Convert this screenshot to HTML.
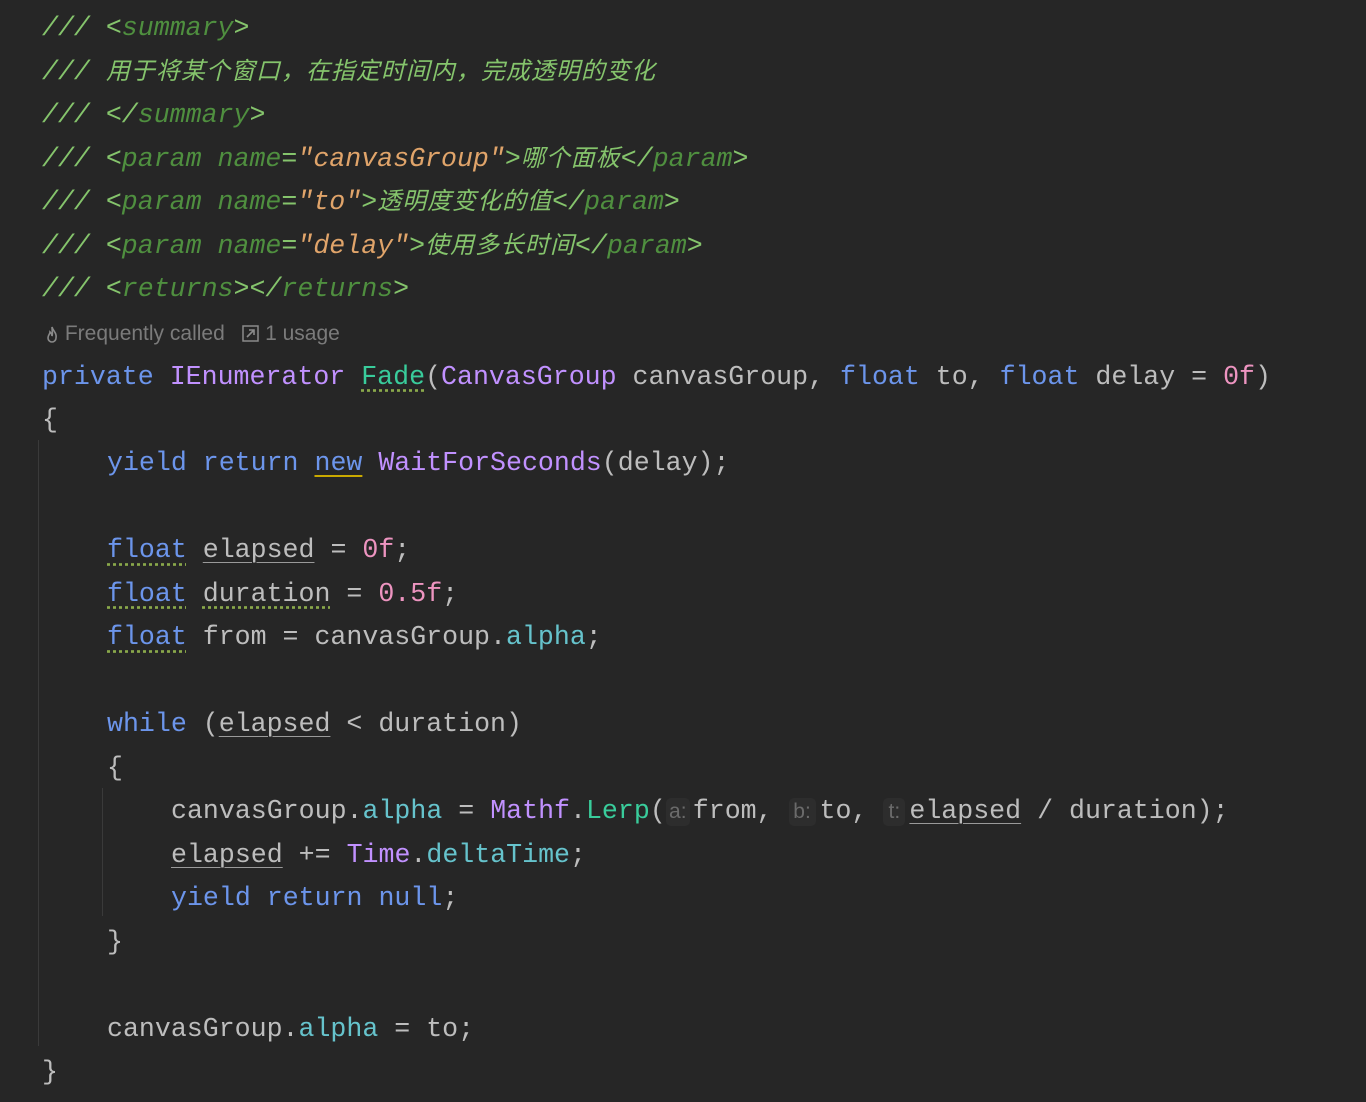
<!DOCTYPE html>
<html><head><meta charset="utf-8"><style>
html,body{margin:0;background:#262626;width:1366px;height:1102px;overflow:hidden}
.l{position:absolute;left:0;height:43.5px;line-height:43.5px;white-space:pre;font-family:"Liberation Mono","Noto Sans CJK SC",monospace;font-size:26.6px;color:#bdbdbd}
.c{color:#85c46c;font-style:italic}
.t{color:#4f8f3f;font-style:italic}
.s{color:#e0a46a;font-style:italic}
.z{font-family:"Noto Sans CJK SC",sans-serif;font-size:24px;font-style:italic;color:#85c46c;letter-spacing:1px;line-height:0}
.k{color:#6c95eb}.p{color:#c191ff}.m{color:#39cc9b}.n{color:#ed94c0}.f{color:#66c3cc}
.dot{text-decoration:underline dotted #8aa84a;text-underline-offset:6px}
.ul{text-decoration:underline #9a9a9a;text-decoration-thickness:1px;text-underline-offset:5px}
.uy{text-decoration:underline #c9a900;text-underline-offset:5px}
.h{display:inline-block;font-family:"Liberation Sans",sans-serif;font-size:21px;color:#6b6b6b;background:#2d2d2d;border-radius:5px;text-align:center;line-height:28px}
.hint{font-family:"Liberation Sans",sans-serif;font-size:21px;color:#7b7b7b}
.g{position:absolute;width:1px;background:#3a3a3a}
</style></head><body>
<div class="g" style="left:38px;top:440px;height:606px"></div>
<div class="g" style="left:102px;top:788px;height:128px"></div>
<div class="l" style="top:7px;left:42px"><span class="c">/// &lt;</span><span class="t">summary</span><span class="c">&gt;</span></div>
<div class="l" style="top:50.5px;left:42px"><span class="c">/// </span><span class="z">用于将某个窗口，在指定时间内，完成透明的变化</span></div>
<div class="l" style="top:94px;left:42px"><span class="c">/// &lt;/</span><span class="t">summary</span><span class="c">&gt;</span></div>
<div class="l" style="top:137.5px;left:42px"><span class="c">/// &lt;</span><span class="t">param name</span><span class="c">=</span><span class="s">"canvasGroup"</span><span class="c">&gt;</span><span class="z">哪个面板</span><span class="c">&lt;/</span><span class="t">param</span><span class="c">&gt;</span></div>
<div class="l" style="top:181px;left:42px"><span class="c">/// &lt;</span><span class="t">param name</span><span class="c">=</span><span class="s">"to"</span><span class="c">&gt;</span><span class="z">透明度变化的值</span><span class="c">&lt;/</span><span class="t">param</span><span class="c">&gt;</span></div>
<div class="l" style="top:224.5px;left:42px"><span class="c">/// &lt;</span><span class="t">param name</span><span class="c">=</span><span class="s">"delay"</span><span class="c">&gt;</span><span class="z">使用多长时间</span><span class="c">&lt;/</span><span class="t">param</span><span class="c">&gt;</span></div>
<div class="l" style="top:268px;left:42px"><span class="c">/// &lt;</span><span class="t">returns</span><span class="c">&gt;&lt;/</span><span class="t">returns</span><span class="c">&gt;</span></div>
<div class="l hint" style="top:312px;left:45px"><svg width="14" height="18" viewBox="0 0 14 18" style="vertical-align:-3px"><path d="M7 2C8 6 12 8 11 13a4 4 0 0 1-8 0C3 10 5 9 5 7c1 1 2 2 2 4 1-2 0-5 0-9z" fill="none" stroke="#8a8a8a" stroke-width="1.6"/></svg> Frequently called   <svg width="17" height="17" viewBox="0 0 17 17" style="vertical-align:-2px"><rect x="1" y="1" width="15" height="15" fill="none" stroke="#8a8a8a" stroke-width="1.5"/><path d="M5 12L12 5M7 5h5v5" fill="none" stroke="#8a8a8a" stroke-width="1.6"/></svg> 1 usage</div>
<div class="l" style="top:355.5px;left:42px"><span class="k">private</span> <span class="p">IEnumerator</span> <span class="m dot">Fade</span>(<span class="p">CanvasGroup</span> canvasGroup, <span class="k">float</span> to, <span class="k">float</span> delay = <span class="n">0f</span>)</div>
<div class="l" style="top:399px;left:42px">{</div>
<div class="l" style="top:442px;left:107px"><span class="k">yield return</span> <span class="k uy">new</span> <span class="p">WaitForSeconds</span>(delay);</div>
<div class="l" style="top:529px;left:107px"><span class="k dot">float</span> <span class="ul">elapsed</span> = <span class="n">0f</span>;</div>
<div class="l" style="top:572.5px;left:107px"><span class="k dot">float</span> <span class="dot">duration</span> = <span class="n">0.5f</span>;</div>
<div class="l" style="top:616px;left:107px"><span class="k dot">float</span> from = canvasGroup.<span class="f">alpha</span>;</div>
<div class="l" style="top:703px;left:107px"><span class="k">while</span> (<span class="ul">elapsed</span> &lt; duration)</div>
<div class="l" style="top:746.5px;left:107px">{</div>
<div class="l" style="top:790px;left:171px">canvasGroup.<span class="f">alpha</span> = <span class="p">Mathf</span>.<span class="m">Lerp</span>(<span class="h" style="width:24px">a:</span><span style="display:inline-block;width:3px"></span>from, <span class="h" style="width:27px">b:</span><span style="display:inline-block;width:4px"></span>to, <span class="h" style="width:22px">t:</span><span style="display:inline-block;width:4px"></span><span class="ul">elapsed</span> / duration);</div>
<div class="l" style="top:833.5px;left:171px"><span class="ul">elapsed</span> += <span class="p">Time</span>.<span class="f">deltaTime</span>;</div>
<div class="l" style="top:877px;left:171px"><span class="k">yield return null</span>;</div>
<div class="l" style="top:920.5px;left:107px">}</div>
<div class="l" style="top:1007.5px;left:107px">canvasGroup.<span class="f">alpha</span> = to;</div>
<div class="l" style="top:1051px;left:42px">}</div>
</body></html>
